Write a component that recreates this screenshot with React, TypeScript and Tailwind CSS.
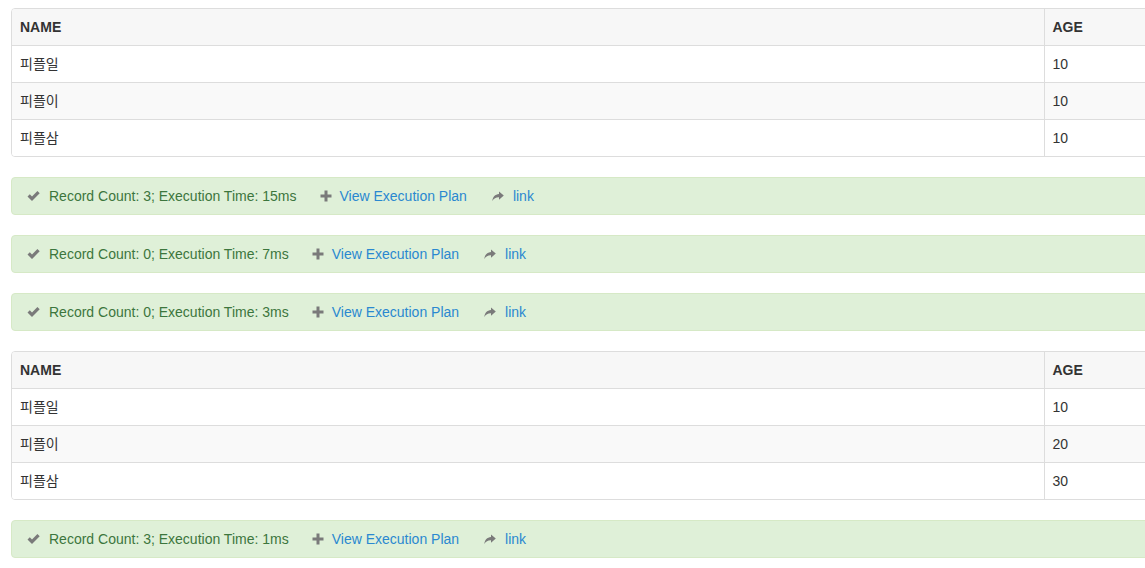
const rows1 = [
  { name: "피플일", age: 10 },
  { name: "피플이", age: 10 },
  { name: "피플삼", age: 10 },
];

const rows2 = [
  { name: "피플일", age: 10 },
  { name: "피플이", age: 20 },
  { name: "피플삼", age: 30 },
];

const font = "font-['Liberation_Sans','Noto_Sans_CJK_KR',Arial,sans-serif]";

function OkIcon() {
  return (
    <svg width="13" height="12" viewBox="0 0 13 12" className="shrink-0">
      <path d="M0.5 6.5 L2.8 4.2 L5 6.4 L10.4 1 L12.7 3.3 L5 11 Z" fill="#7a7a7a" />
    </svg>
  );
}

function PlusIcon() {
  return (
    <svg width="12" height="12" viewBox="0 0 12 12" className="shrink-0">
      <path d="M4.5 0.5 H7.5 V4.5 H11.5 V7.5 H7.5 V11.5 H4.5 V7.5 H0.5 V4.5 H4.5 Z" fill="#7a7a7a" />
    </svg>
  );
}

function ShareIcon() {
  return (
    <svg width="12" height="11" viewBox="0 0 12 11" className="shrink-0">
      <path d="M7 0.5 L11.8 4.6 L7 8.7 V6.3 C4 6.2 2 7.3 0.3 10 C0.8 5.6 3 3.3 7 2.9 Z" fill="#7a7a7a" />
    </svg>
  );
}

function ResultTable({ rows }: { rows: { name: string; age: number }[] }) {
  return (
    <div className="w-[1250px] rounded-[4px] border border-[#dddddd] overflow-hidden">
      <table className="w-full border-collapse text-[14px] text-[#333333]">
        <thead>
          <tr className="bg-[#f7f7f7] h-[36px]">
            <th className="w-[1032px] text-left font-bold px-[8px] pt-[2px] align-middle border-r border-[#dddddd]">NAME</th>
            <th className="text-left font-bold px-[8px] pt-[2px] align-middle">AGE</th>
          </tr>
        </thead>
        <tbody>
          {rows.map((r, i) => (
            <tr key={i} className={`h-[37px] border-t border-[#dddddd] ${i % 2 === 1 ? "bg-[#f9f9f9]" : "bg-white"}`}>
              <td className="px-[8px] pt-[2px] align-middle border-r border-[#dddddd]">{r.name}</td>
              <td className="px-[8px] pt-[2px] align-middle">{r.age}</td>
            </tr>
          ))}
        </tbody>
      </table>
    </div>
  );
}

function ResultAlert({ count, ms }: { count: number; ms: number }) {
  return (
    <div className="w-[1250px] h-[38px] flex items-center pl-[15px] rounded-[4px] border border-[#d6e9c6] bg-[#dff0d8] text-[14px]">
      <OkIcon />
      <span className="ml-[9px] text-[#3c763d]">
        Record Count: {count}; Execution Time: {ms}ms
      </span>
      <span className="ml-[23px] flex items-center">
        <PlusIcon />
        <a className="ml-[8px] text-[#2a88d0] cursor-pointer">View Execution Plan</a>
      </span>
      <span className="ml-[25px] flex items-center">
        <ShareIcon />
        <a className="ml-[9px] text-[#2a88d0] cursor-pointer">link</a>
      </span>
    </div>
  );
}

export default function App() {
  return (
    <div className={`w-[1145px] h-[568px] overflow-hidden bg-white ${font}`}>
      <div className="pl-[11px] pt-[8px] flex flex-col gap-[20px]">
        <ResultTable rows={rows1} />
        <ResultAlert count={3} ms={15} />
        <ResultAlert count={0} ms={7} />
        <ResultAlert count={0} ms={3} />
        <ResultTable rows={rows2} />
        <ResultAlert count={3} ms={1} />
      </div>
    </div>
  );
}
